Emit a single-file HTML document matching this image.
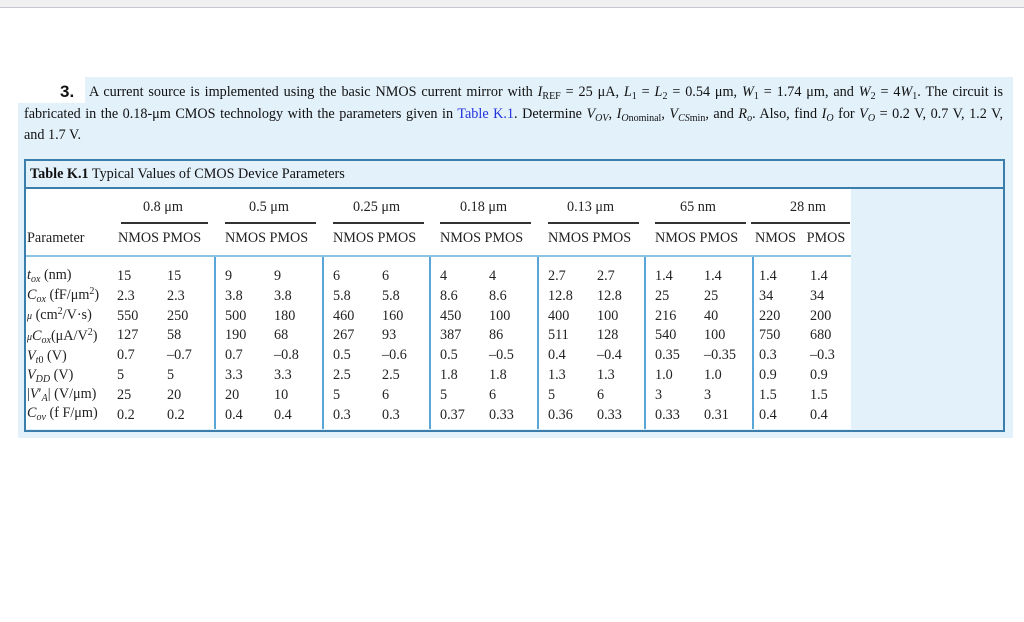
<!DOCTYPE html>
<html><head><meta charset="utf-8"><style>
body{margin:0;width:1024px;height:622px;background:#fff;position:relative;overflow:hidden;font-family:"Liberation Serif",serif;color:#111}
.a{position:absolute;white-space:nowrap}
.ln{position:absolute;font-size:14.2px;line-height:16px;text-align:justify;text-align-last:justify;white-space:nowrap}
.t{position:absolute;font-size:14.2px;line-height:16px;white-space:nowrap;color:#222}
sub{font-size:10px;vertical-align:-3px;line-height:0}
sup{font-size:10px;vertical-align:5px;line-height:0}
i{font-style:italic}
.vl{position:absolute;top:257px;width:2px;height:172px;background:#5aa6d6}
.ul{position:absolute;top:222px;height:1.5px;background:#333}
</style></head><body>
<div style="position:absolute;left:0;top:0;width:1024px;height:7px;background:#f0f0f0;border-bottom:1px solid #c8c8d0"></div>
<div style="position:absolute;left:18px;top:77px;width:995px;height:361px;background:#e3f1fb"></div>
<div style="position:absolute;left:18px;top:77px;width:67px;height:26px;background:#fff"></div>
<div class="a" style="left:60px;top:82px;font:bold 17px 'Liberation Sans',sans-serif">3.</div>
<div class="ln" style="left:89px;top:84px;width:914px">A current source is implemented using the basic NMOS current mirror with <i>I</i><sub>REF</sub> = 25 μA, <i>L</i><sub>1</sub> = <i>L</i><sub>2</sub> = 0.54 μm, <i>W</i><sub>1</sub> = 1.74 μm, and <i>W</i><sub>2</sub> = 4<i>W</i><sub>1</sub>. The circuit is</div>
<div class="ln" style="left:24px;top:106px;width:979px">fabricated in the 0.18-μm CMOS technology with the parameters given in <span style="color:#2233dd">Table K.1</span>. Determine <i>V</i><sub><i>OV</i></sub>, <i>I</i><sub><i>O</i>nominal</sub>, <i>V</i><sub><i>CS</i>min</sub>, and <i>R</i><sub><i>o</i></sub>. Also, find <i>I</i><sub><i>O</i></sub> for <i>V</i><sub><i>O</i></sub> = 0.2 V, 0.7 V, 1.2 V,</div>
<div class="a" style="left:24px;top:127px;font-size:14.2px;line-height:16px">and 1.7 V.</div>

<div style="position:absolute;left:24px;top:159px;width:977px;height:269px;border:2px solid #3b7eab"></div>
<div style="position:absolute;left:24px;top:187px;width:979px;height:2px;background:#3b7eab"></div>
<div style="position:absolute;left:26px;top:189px;width:825px;height:240px;background:#fff"></div>
<div style="position:absolute;left:26px;top:255px;width:825px;height:2px;background:#8cc4e6"></div>
<div class="a" style="left:30px;top:166px;font-size:14.2px;line-height:16px"><b>Table K.1</b> Typical Values of CMOS Device Parameters</div>

<div class="vl" style="left:214px"></div><div class="vl" style="left:322px"></div><div class="vl" style="left:429px"></div><div class="vl" style="left:537px"></div><div class="vl" style="left:644px"></div><div class="vl" style="left:752px"></div>

<div class="ul" style="left:121px;width:87px"></div><div class="ul" style="left:225px;width:91px"></div><div class="ul" style="left:333px;width:91px"></div><div class="ul" style="left:440px;width:91px"></div><div class="ul" style="left:548px;width:91px"></div><div class="ul" style="left:655px;width:91px"></div><div class="ul" style="left:751px;width:99px"></div>

<div class="t" style="left:143px;top:199px">0.8 μm</div>
<div class="t" style="left:249px;top:199px">0.5 μm</div>
<div class="t" style="left:353px;top:199px">0.25 μm</div>
<div class="t" style="left:460px;top:199px">0.18 μm</div>
<div class="t" style="left:567px;top:199px">0.13 μm</div>
<div class="t" style="left:680px;top:199px">65 nm</div>
<div class="t" style="left:790px;top:199px">28 nm</div>

<div class="t" style="left:27px;top:230px">Parameter</div>
<div class="t" style="left:118px;top:230px">NMOS PMOS</div>
<div class="t" style="left:225px;top:230px">NMOS PMOS</div>
<div class="t" style="left:333px;top:230px">NMOS PMOS</div>
<div class="t" style="left:440px;top:230px">NMOS PMOS</div>
<div class="t" style="left:548px;top:230px">NMOS PMOS</div>
<div class="t" style="left:655px;top:230px">NMOS PMOS</div>
<div class="t" style="left:755px;top:230px">NMOS&nbsp;&nbsp; PMOS</div>

<div class="t" style="left:27px;top:267px"><i>t</i><sub><i>ox</i></sub> (nm)</div>
<div class="t" style="left:27px;top:287px"><i>C</i><sub><i>ox</i></sub> (fF/μm<sup>2</sup>)</div>
<div class="t" style="left:27px;top:307px"><i style="font-size:10px">μ</i> (cm<sup>2</sup>/V·s)</div>
<div class="t" style="left:27px;top:328px"><i style="font-size:10px">μ</i><i>C</i><sub><i>ox</i></sub>(μA/V<sup>2</sup>)</div>
<div class="t" style="left:27px;top:348px"><i>V</i><sub><i>t</i>0</sub> (V)</div>
<div class="t" style="left:27px;top:367px"><i>V</i><sub><i>DD</i></sub> (V)</div>
<div class="t" style="left:27px;top:386px">|<i>V</i>′<sub><i>A</i></sub>| (V/μm)</div>
<div class="t" style="left:27px;top:405px"><i>C</i><sub><i>ov</i></sub> (f F/μm)</div>

<div style="position:absolute;left:0;top:0">
<div class="t" style="left:117px;top:267px;line-height:19.8px">15<br>2.3<br>550<br>127<br>0.7<br>5<br>25<br>0.2</div>
<div class="t" style="left:167px;top:267px;line-height:19.8px">15<br>2.3<br>250<br>58<br>–0.7<br>5<br>20<br>0.2</div>
<div class="t" style="left:225px;top:267px;line-height:19.8px">9<br>3.8<br>500<br>190<br>0.7<br>3.3<br>20<br>0.4</div>
<div class="t" style="left:274px;top:267px;line-height:19.8px">9<br>3.8<br>180<br>68<br>–0.8<br>3.3<br>10<br>0.4</div>
<div class="t" style="left:333px;top:267px;line-height:19.8px">6<br>5.8<br>460<br>267<br>0.5<br>2.5<br>5<br>0.3</div>
<div class="t" style="left:382px;top:267px;line-height:19.8px">6<br>5.8<br>160<br>93<br>–0.6<br>2.5<br>6<br>0.3</div>
<div class="t" style="left:440px;top:267px;line-height:19.8px">4<br>8.6<br>450<br>387<br>0.5<br>1.8<br>5<br>0.37</div>
<div class="t" style="left:489px;top:267px;line-height:19.8px">4<br>8.6<br>100<br>86<br>–0.5<br>1.8<br>6<br>0.33</div>
<div class="t" style="left:548px;top:267px;line-height:19.8px">2.7<br>12.8<br>400<br>511<br>0.4<br>1.3<br>5<br>0.36</div>
<div class="t" style="left:597px;top:267px;line-height:19.8px">2.7<br>12.8<br>100<br>128<br>–0.4<br>1.3<br>6<br>0.33</div>
<div class="t" style="left:655px;top:267px;line-height:19.8px">1.4<br>25<br>216<br>540<br>0.35<br>1.0<br>3<br>0.33</div>
<div class="t" style="left:704px;top:267px;line-height:19.8px">1.4<br>25<br>40<br>100<br>–0.35<br>1.0<br>3<br>0.31</div>
<div class="t" style="left:759px;top:267px;line-height:19.8px">1.4<br>34<br>220<br>750<br>0.3<br>0.9<br>1.5<br>0.4</div>
<div class="t" style="left:810px;top:267px;line-height:19.8px">1.4<br>34<br>200<br>680<br>–0.3<br>0.9<br>1.5<br>0.4</div>
</div>
</body></html>
